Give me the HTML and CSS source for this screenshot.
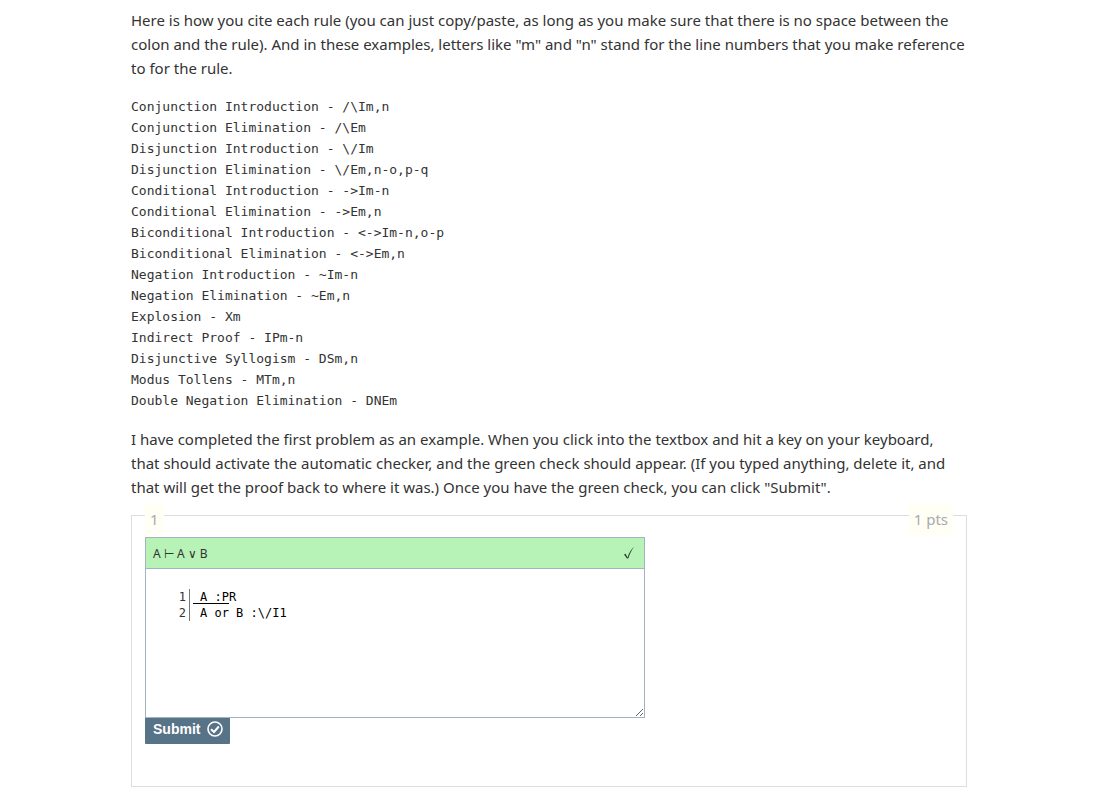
FILE: index.html
```html
<!DOCTYPE html>
<html lang="en">
<head>
<meta charset="utf-8">
<title>Proof exercises</title>
<link rel="stylesheet" href="styles.css">
</head>
<body>
<main class="page">
<p class="text">Here is how you cite each rule (you can just copy/paste, as long as you make sure that there is no space between the<br>colon and the rule). And in these examples, letters like "m" and "n" stand for the line numbers that you make reference<br>to for the rule.</p>
<pre class="rules">Conjunction Introduction - /\Im,n
Conjunction Elimination - /\Em
Disjunction Introduction - \/Im
Disjunction Elimination - \/Em,n-o,p-q
Conditional Introduction - -&gt;Im-n
Conditional Elimination - -&gt;Em,n
Biconditional Introduction - &lt;-&gt;Im-n,o-p
Biconditional Elimination - &lt;-&gt;Em,n
Negation Introduction - ~Im-n
Negation Elimination - ~Em,n
Explosion - Xm
Indirect Proof - IPm-n
Disjunctive Syllogism - DSm,n
Modus Tollens - MTm,n
Double Negation Elimination - DNEm</pre>
<p class="text">I have completed the first problem as an example. When you click into the textbox and hit a key on your keyboard,<br>that should activate the automatic checker, and the green check should appear. (If you typed anything, delete it, and<br>that will get the proof back to where it was.) Once you have the green check, you can click "Submit".</p>
<section class="exercise">
  <span class="tag tag-number">1</span>
  <span class="tag tag-points">1 pts</span>
  <div class="checker">
    <div class="goal">
      <label for="proof">A ⊢ A ∨ B</label>
      <svg class="check" viewBox="0 0 12 14" aria-label="Correct"><path d="M1 8.500l1.500-.8 2 3.800C6 7 8 3.500 11 .8 8.500 4.500 6.800 8 5.200 12.500H4z" fill="#263a2b"/></svg>
    </div>
    <div class="editor">
      <textarea class="proof" id="proof" spellcheck="false">A :PR
A or B :\/I1</textarea>
      <div class="gutter" aria-hidden="true">
        <div class="row"><span class="num">1</span><span class="premise"></span></div>
        <div class="row"><span class="num">2</span></div>
      </div>
    </div>
  </div>
  <button class="submit" type="button">Submit
    <svg class="submit-icon" viewBox="0 0 16 16" fill="none" stroke="#fff" stroke-width="1.600"><circle cx="8" cy="8" r="7"/><path d="M4 8.200l3 2.800 4.800-5.500" stroke-width="2"/></svg>
  </button>
</section>
</main>
</body>
</html>
```
FILE: styles.css
```css
body {
  margin: 0;
  background: #fff;
  color: #333;
  font: 15px/24px "Noto Sans", sans-serif;
}
.page {
  padding: 8px 128px 8px 131px;
}
.text {
  margin: 0 0 16px;
  white-space: nowrap;
}
.rules {
  margin: 0 0 16px;
  font: 13px/21px "DejaVu Sans Mono", monospace;
}
.exercise {
  position: relative;
  border: 1px solid #ddd;
  padding: 21px 13px 42px;
}
.tag {
  position: absolute;
  top: -13px;
  padding: 4px 5px;
  background: #fffff5;
  color: #aaa;
}
.tag-number {
  left: 13px;
}
.tag-points {
  right: 13px;
}
.checker {
  max-width: 498px;
  border: 1px solid #a3b4c0;
}
.goal {
  display: flex;
  align-items: center;
  justify-content: space-between;
  height: 30px;
  padding: 0 9px 0 7px;
  border-bottom: 1px solid #a3b4c0;
  background: #b7f2b7;
  font-size: 12px;
}
.goal label {
  padding-top: 2px;
}
.check {
  width: 12px;
  height: 14px;
}
.editor {
  position: relative;
  font: 12px/16px "DejaVu Sans Mono", monospace;
}
.proof {
  display: block;
  box-sizing: border-box;
  width: 100%;
  height: 148px;
  padding: 20px 10px 20px 54px;
  border: 0;
  outline: 0;
  background: #fff;
  color: #000;
  font: inherit;
  resize: vertical;
}
.gutter {
  position: absolute;
  top: 20px;
  left: 24px;
  pointer-events: none;
}
.row {
  display: flex;
  height: 16px;
}
.num {
  width: 16px;
  padding-right: 3px;
  border-right: 1px solid #777;
  color: #333;
  text-align: right;
}
.premise {
  width: 36px;
  height: 14px;
  margin-left: 3px;
  border-bottom: 1px solid #000;
}
.submit {
  display: flex;
  align-items: center;
  gap: 7px;
  height: 26px;
  padding: 0 7px 4px 8px;
  border: 0;
  border-radius: 0 0 1px 1px;
  background: #567388;
  color: #fff;
  font: bold 14px/20px "Liberation Sans", sans-serif;
}
.submit-icon {
  width: 16px;
  height: 16px;
}
```
